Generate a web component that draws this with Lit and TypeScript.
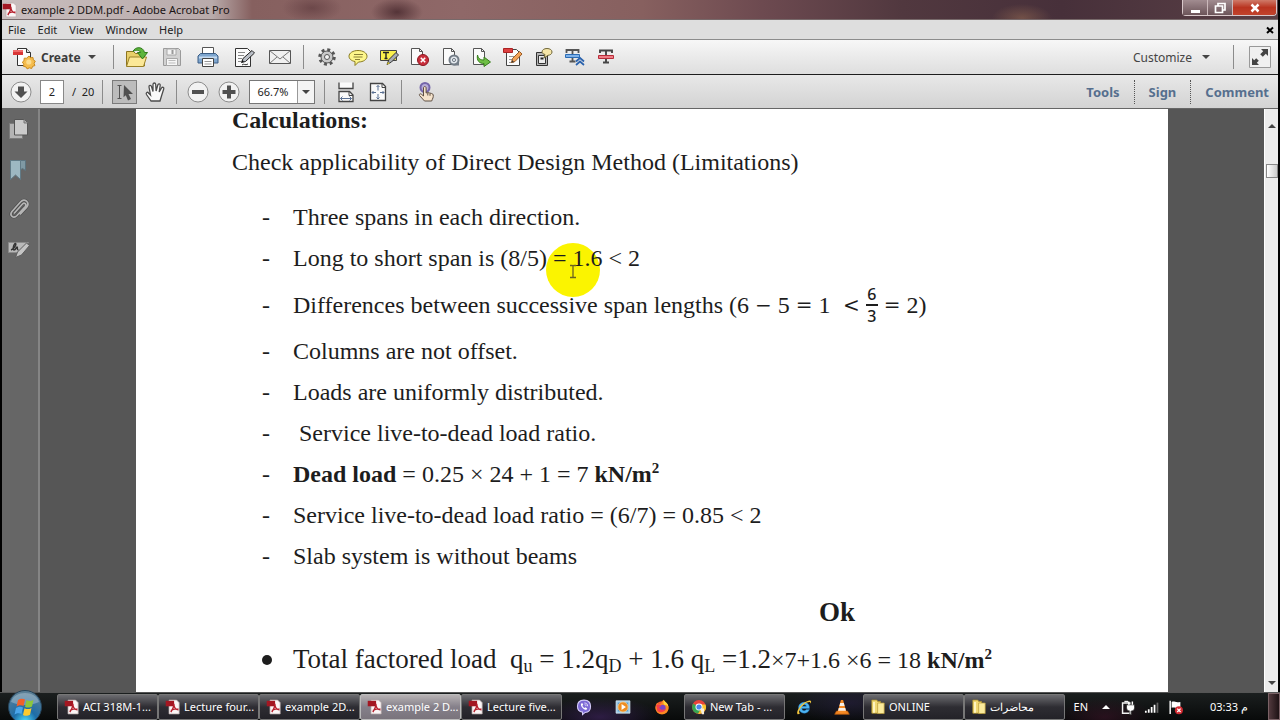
import { LitElement, html, css, svg, nothing } from "lit";
import { customElement, property } from "lit/decorators.js";
import { classMap } from "lit/directives/class-map.js";

const page = svg`<path d="M5.5 2.5h8l3 3v13h-11z" fill="#fbfbfb" stroke="#555"/><path d="M13.5 2.5v3h3" fill="none" stroke="#555"/>`;

const ICONS: Record<string, unknown> = {
  create: svg`<path d="M5.500 2.500h9l4 4v13h-13z" fill="#fdfdfd" stroke="#333"/><path d="M14.500 2.500v4h4" fill="#ddd" stroke="#333"/>
    <path d="M1 4h10v5H1z" fill="#d93636"/><path d="M1 4h10v2H1z" fill="#ee6a6a"/>
    <path d="M17 10l1.600 1.800 2.400-.3.300 2.400 2 1.300-1.200 2.100.8 2.300-2.300.7-.9 2.200-2.300-.7-2.200 1.100-1.300-2-2.400-.5.300-2.300-1.500-1.900 1.700-1.600.2-2.400 2.400 0z" fill="#f5bd4e" stroke="#c98a1e"/><circle cx="16.800" cy="16" r="2.600" fill="#fbdc8f"/>`,
  open: svg`<path d="M1.500 20V5.500h7l2 2h9V20z" fill="#e8cf6a" stroke="#8d7420"/><path d="M1.500 20.500L4.500 11h17l-3 9.500z" fill="#fbe898" stroke="#9a8128"/>
    <path d="M8 5.500C10 .500 18 0 19.500 6.500h3L17.500 13l-5-6.500h3C14.500 4 11.500 3.500 8 5.500z" fill="#5db53c" stroke="#2e7a1a"/>`,
  save: svg`<path d="M2.500 2.500h15l2 2v15h-17z" fill="#d2d2d2" stroke="#9a9a9a"/><path d="M6 3h9v6H6z" fill="#f4f4f4" stroke="#a8a8a8"/><path d="M11.500 4v4" stroke="#999" stroke-width="2"/><path d="M5.500 12.500h11v7h-11z" fill="#f6f6f6" stroke="#a8a8a8"/><path d="M7.500 14.500h7M7.500 17h7" stroke="#bbb"/>`,
  print: svg`<path d="M5.500 8V1.500h11V8" fill="#fff" stroke="#555"/><path d="M3.500 7.500h15l2.500 2.500v7h-20v-7z" fill="#7ea6cf" stroke="#3a5d85"/><path d="M2 11.500h18" stroke="#c5daef" stroke-width="2"/><path d="M5.500 12.500h11v8h-11z" fill="#fff" stroke="#444"/><path d="M7.500 15.500h7M7.500 18h7" stroke="#999"/>`,
  edit: svg`<path d="M2.500 2.500h12l3 3v15h-15z" fill="#fbfbfb" stroke="#333"/><path d="M5 6.500h7M5 9.500h6M5 12.500h4M5 15.500h3" stroke="#888"/><path d="M8.500 16.500l1.500-4 9-8 2.500 2.500-9 8.500z" fill="#b9bec6" stroke="#222"/><path d="M8.500 16.500l1-2.500 1.500 1.500z" fill="#111"/><path d="M9 19c2-2 3 1 6-1" fill="none" stroke="#333"/>`,
  mail: svg`<path d="M.500 4.500h21v13H.500z" fill="#f1f1f1" stroke="#555"/><path d="M.500 4.500L11 13 21.500 4.500M.500 17.500L8 11M21.500 17.500L14 11" fill="none" stroke="#777"/>`,
  gear: svg`<circle cx="11" cy="11" r="7" fill="none" stroke="#555" stroke-width="3.500" stroke-dasharray="2.800 2.700"/><circle cx="11" cy="11" r="6" fill="#c9c9c9" stroke="#555"/><circle cx="11" cy="11" r="2.500" fill="#f4f4f4" stroke="#555"/>`,
  comment: svg`<path d="M11 4.500c5 0 9 2.500 9 5.700s-3.500 5.800-8.500 5.800L8 19.500V15.500C4.500 15 2 12.900 2 10.200c0-3.200 4-5.700 9-5.700z" fill="#fdf68b" stroke="#8a7c22"/><path d="M7 8.500h9M6.500 11h9M8 13.500h5" stroke="#8a8136"/>`,
  mark: svg`<path d="M2.500 4.500h16v10h-16z" fill="#fbf04c" stroke="#444"/><path d="M5 6.500h6M8 6.500v6M6.500 12.500h3" stroke="#222" stroke-width="1.400"/><path d="M9 18.500l2-5 7-7 2.500 2.500-7 7z" fill="#a9adb2" stroke="#333"/><path d="M9 18.500l1-2.500 1.800 1.500z" fill="#d7c21c"/>`,
  remove: svg`<g transform="translate(-3 0)">${page}</g><circle cx="14" cy="14" r="5.500" fill="#c92f3c" stroke="#8c1620"/><path d="M11.800 11.800l4.400 4.400M16.200 11.800l-4.400 4.400" stroke="#fff" stroke-width="1.600"/>`,
  rotate: svg`<g transform="translate(-2 0)">${page}</g><circle cx="14" cy="14" r="4.500" fill="#e4e9ee" stroke="#747d87" stroke-width="2"/><circle cx="14" cy="14" r="1.600" fill="none" stroke="#747d87"/><path d="M13 19.500h6v-5z" fill="#747d87"/>`,
  extract: svg`<g transform="translate(-3 0)">${page}</g><path d="M6.500 9c1 4 3 5 6.500 5v-3l6.500 5-6.500 4.500v-3C8 17.500 5.500 14.500 6.500 9z" fill="#6fbe45" stroke="#377d1c"/>`,
  redact: svg`<path d="M4.500 3.500h10l3 3v13h-13z" fill="#fbfbfb" stroke="#444"/><path d="M7 10.500h7M7 13.500h7M7 16.500h5" stroke="#999"/><path d="M1.500 2.500h9v4h-9z" fill="#dc4040" stroke="#ac2222"/><path d="M9.500 16.500l1-4 7-7 2.500 2.500-7 7.500z" fill="#f2a35a" stroke="#9a5a22"/><path d="M9.500 16.500l.7-2.200 1.600 1.500z" fill="#333"/>`,
  stamp: svg`<path d="M3.500 6.500h11v13h-11z" fill="#b4b4b4" stroke="#333"/><path d="M5.500 9.500h7v8h-7z" fill="#ececec" stroke="#333"/><path d="M7.500 12.500h3" stroke="#222" stroke-width="2"/><path d="M14 2.500c3 0 5 1.500 5 3.500s-2 3.200-4 3.300L11 12l1-3.500C10 8 9 7 9 6c0-2 2-3.500 5-3.500z" fill="#f6e6a8" stroke="#6f6638"/>`,
  replace: svg`<path d="M2.500 7V4h12v3M8.500 4.500v11M5.500 15.500h6" fill="none" stroke="#555" stroke-width="1.800"/><path d="M1.500 8.500h14v3h-14z" fill="#7fb2ea" stroke="#2b6cb5"/><path d="M12 15.500l4-3.500 4 3.500M12 19l4-3.500 4 3.500" fill="none" stroke="#2a62ad" stroke-width="1.700"/>`,
  strike: svg`<path d="M5 7V4.500h12V7M11 4.500v12M8 16.500h6" fill="none" stroke="#444" stroke-width="1.900"/><path d="M3.500 9.500h15v3h-15z" fill="#ee7d85" stroke="#b92c3a"/>`,
  expand: svg`<path d="M.500 .500h21v21H.500z" fill="#f0f0f0" stroke="#999"/><path d="M19 3v7l-2.200-2.200-3 3L11.200 8.200l3-3L12 3zM3 19v-7l2.200 2.200 2-2L9.800 14.800l-2 2L10 19z" fill="#444"/>`,
  down: svg`<circle cx="11" cy="11" r="10" fill="#f2f2f2" stroke="#8c8c8c"/><path d="M8 5.500h6v5h3.500L11 17 4.500 10.500H8z" fill="#505050"/>`,
  select: svg`<path d="M3.500 4.500h4M3.500 17.500h4M5.500 4.500v13" fill="none" stroke="#555"/><path d="M10 4l9 9h-4.500l2.500 5-3 1.500-2.200-5.200-2.300 2z" fill="#505050"/>`,
  hand: svg`<path d="M7 20L2.500 13.500C1.500 11.500 3.500 10.500 4.500 12L6.500 14 5 6c-.3-2 2-2.300 2.500-.5L9 10.500 9 3.500c0-2 2.500-2 2.700 0l.4 6.500L13.800 4c.5-1.800 2.700-1.300 2.400.5L15.200 11l2.300-4c1-1.500 2.800-.5 2.200 1L17.500 15l-1.500 5z" fill="#fafafa" stroke="#4c4c4c" stroke-width="1.300"/>`,
  minus: svg`<circle cx="11" cy="11" r="10" fill="#f2f2f2" stroke="#8c8c8c"/><path d="M5 9h12v4H5z" fill="#505050"/>`,
  plus: svg`<circle cx="11" cy="11" r="10" fill="#f2f2f2" stroke="#8c8c8c"/><path d="M9 4.500h4V9h4.500v4H13v4.500H9V13H4.500V9H9z" fill="#505050"/>`,
  fitwidth: svg`<path d="M4 1.500v6h14v-6" fill="#fafafa" stroke="#444" stroke-width="1.300"/><path d="M4 20.500v-10h10.500l3.500 3.500v6.500z" fill="#fafafa" stroke="#444" stroke-width="1.300"/><path d="M14 10.500v4h4" fill="none" stroke="#444"/><path d="M5.500 17.500h11M7.500 15.500l-2 2 2 2M14.500 15.500l2 2-2 2" fill="none" stroke="#5a7092"/>`,
  fitpage: svg`<path d="M3.500 2.500h12l3 3v14h-15z" fill="#fafafa" stroke="#444" stroke-width="1.300"/><path d="M15 2.500v4h4" fill="none" stroke="#444"/><path d="M11 4.500v5M11 13v5M5 11.500h4M13 11.500h4M9.500 6l1.500-1.500L12.500 6M9.500 16.500L11 18l1.500-1.500M6.500 10L5 11.500 6.500 13M15.500 10l1.500 1.500-1.500 1.500" fill="none" stroke="#5a7092"/>`,
  touch: svg`<circle cx="10" cy="6.500" r="4.500" fill="#b7acd9" stroke="#7566aa" stroke-width="2"/><path d="M8.500 7c0-2 2.600-2 2.600 0v5l1.500-.5 2 .5 2 .5 1.600 1c.5 3-.7 4-1.500 6.500H9.500L4.500 14.500c-.8-1.300 1-2.300 2-1.200l2 1.700z" fill="#f5e3cc" stroke="#5f5044"/><path d="M12.800 12v2.500M15 12.500v2.300" stroke="#5f5044"/>`,
  pages: svg`<path d="M1.500 5.500h13v15h-13z" fill="#b4b4b4" stroke="#7c7c7c"/><path d="M6.500 1.500h10l3 3v12.500h-13z" fill="#cbcbcb" stroke="#555"/><path d="M16 1.500v3.500h3.500" fill="#aaa" stroke="#777"/>`,
  bookmark: svg`<path d="M11.500 2.500h6v10l-3-2-3 2z" fill="#7f99a4" stroke="#5c7480"/><path d="M2.500 2.500h10v19l-5-4.500-5 4.500z" fill="#9db8c2" stroke="#617b87"/>`,
  clip: svg`<path d="M6 15.500L14.500 6c2-2 4.500.3 2.800 2.500L9 17.500c-3.500 3.500-8 0-5-4L12.500 4c4-4.500 10 .5 6 5.500L12 16.500" fill="none" stroke="#4c4c4c" stroke-width="3"/><path d="M6 15.500L14.500 6c2-2 4.500.3 2.800 2.500L9 17.500c-3.500 3.500-8 0-5-4L12.500 4c4-4.500 10 .5 6 5.500L12 16.500" fill="none" stroke="#b5b5b5" stroke-width="1.700"/>`,
  sign: svg`<path d="M.500 4.500h20l-8 10H.500z" fill="#b9b9b9" stroke="#8b8b8b"/><path d="M3 12c3-1 6-6 4.500-6.500S4 12 6 12s2-3 3-3-.5 3 1.500 3" fill="none" stroke="#333" stroke-width="1.400"/><path d="M7.500 19.500l2-5.500 9-9 3 2.500-8 9.500z" fill="#c4c4c4" stroke="#5c5c5c"/>`,
  pdf: svg`<path d="M5.500 1.500h10.500l3.500 3.500v15.500h-14z" fill="#fbf6f6" stroke="#b8a8a8"/><path d="M1 2.500h11.500V10H1z" fill="#a31722"/><path d="M8 18c2.500-4 4.500-8 4.200-11.500M12.200 7c0 5 3 8 6.300 7.800M8 16c3.500-2.500 7-3 10.500-2" fill="none" stroke="#b51d2a" stroke-width="1.800"/>`,
  viber: svg`<path d="M11 1.500c6 0 9 2.500 9 8.500s-3 8.500-7.500 8.500L9 21.500V18C4 17.500 2 15 2 10c0-6 3-8.500 9-8.500z" fill="#7d6ad6" stroke="#d4ccf7" stroke-width="1.500"/><path d="M7 6.500c-1 1.500 1 7 7 8.500l1.500-2-2.500-1.700-1.300 1C10 11.500 9 10.200 8.800 9L10 8 8.500 5.500z" fill="#fff"/><path d="M11.500 5.500c3 0 4.500 1.800 4.500 4.500M11.800 7.800c1.500 0 2 .8 2 2" fill="none" stroke="#fff"/>`,
  media: svg`<path d="M1.500 2.500h19v17h-19z" fill="#9ecbe8" stroke="#e4f2fb"/><path d="M4 5h14v12H4z" fill="#5d9ecb"/><circle cx="11" cy="11" r="7" fill="#ee8d21" stroke="#fbd296"/><path d="M9 7l6 4-6 4z" fill="#fff"/>`,
  firefox: svg`<circle cx="11" cy="12" r="9" fill="#f4592b"/><path d="M11 21c-5 0-9-4-9-9 0-3 1-5 2.500-7L6 7.500C8 6 9 6.500 10 6.500c0-2 1.500-4.500 3.500-5.500 0 3 6.500 4.500 6.500 11 0 5-4 9-9 9z" fill="#fb8a22"/><path d="M13.500 1c1 3 6 4.500 6.300 10C18 9 17 8 14 8c-1-2-1.500-4-.5-7z" fill="#ffd43b"/><circle cx="11.500" cy="12.500" r="4.500" fill="#7a45c8"/><path d="M3 8c3-1 6-.5 7.500 1.500L7 11c1 4 5 5 9 2.500-1 5-8 6.500-11.500 2.500z" fill="#f63d4a"/>`,
  chrome: svg`<circle cx="11" cy="11" r="9.500" fill="#e9433a"/><path d="M2.800 6.200A9.500 9.500 0 0 0 9.700 20.400L14 13z" fill="#36a752"/><path d="M20 7.500A9.500 9.500 0 0 1 9.700 20.400L15 12 11 7.500z" fill="#fac42d"/><circle cx="11" cy="11" r="4.800" fill="#fff"/><circle cx="11" cy="11" r="3.600" fill="#4a86ec"/><path d="M13 13h5v8h-3z" fill="#f6eedf"/>`,
  ie: svg`<path d="M18.500 14.500c-1 3-4 5-7.300 5A7.700 7.700 0 0 1 3.500 12c0-4.300 3.300-7.500 7.700-7.500 4.500 0 7.600 3.300 7.300 8.500H8c.3 2 1.500 3 3.300 3 1.300 0 2.200-.5 2.700-1.500zM8.200 10h6c-.3-1.500-1.500-2.500-3-2.500-1.600 0-2.700 1-3 2.500z" fill="#4db5f2" stroke="#1d78c2" stroke-width=".6"/><path d="M2 20.500C-.500 17 8 4 18 2c3-.5 3.500 1.500 2 4.500C20.500 3 16 3.500 11 7.500 5.500 12 2.500 18 5.500 19.500 4 20.800 2.500 21.200 2 20.500z" fill="#f3c63c"/>`,
  vlc: svg`<path d="M3.500 16.500h15l2.500 4.500H1z" fill="#f08421" stroke="#b75a0c"/><path d="M9.500 1.500h3L17 18c-3 2-9 2-12 0z" fill="#f58a25"/><path d="M8.500 5.500h5l1 4h-7zM6.500 12.500h9l.8 3.500H5.700z" fill="#f6f0ea"/>`,
  folder: svg`<path d="M2.500 1.500h7l1 2h4v16h-12z" fill="#f0d873" stroke="#b2952f"/><path d="M10.500 5.500h9v14.500h-9z" fill="#fbeb9c" stroke="#b99b38"/><path d="M5.500 4v15" stroke="#fff7c8" stroke-width="2.500"/>`,
  plug: svg`<path d="M3.500 5.500h10v14h-10z" fill="none" stroke="#f2f2f2" stroke-width="2"/><path d="M6 3.500h5" stroke="#f2f2f2" stroke-width="2"/><path d="M9 8h11v4c0 3-2 4.500-4.500 4.500v5h-2v-5C11 16.500 9 15 9 12z" fill="#fff" stroke="#222"/><path d="M12 8V3.500M17 8V3.500" stroke="#fff" stroke-width="2"/>`,
  signal: svg`<path d="M2.500 19v-3M6.500 19v-5M10.500 19v-8M14.500 19V8" stroke="#fff" stroke-width="2.400"/><path d="M18.500 19V5" stroke="#666" stroke-width="2.400"/>`,
  flag: svg`<path d="M3 2.500v18" stroke="#fff" stroke-width="2"/><path d="M5 4c4-1.500 5 1.500 12 0v8c-6 1.500-8-1.500-12 0z" fill="#fff"/><circle cx="15" cy="15.500" r="5.500" fill="#d42c33"/><path d="M12.700 13.200l4.600 4.600M17.300 13.200l-4.600 4.600" stroke="#fff" stroke-width="1.800"/>`,
};

@customElement("ui-icon")
export class UiIcon extends LitElement {
  static styles = css`
    :host { display: block; width: 22px; height: 22px; flex: none; }
    :host([small]) { width: 16px; height: 16px; }
    svg { display: block; width: 100%; height: 100%; overflow: visible; }
  `;
  @property() name = "";
  render() {
    return html`<svg viewBox="0 0 22 22" aria-hidden="true">${ICONS[this.name] ?? nothing}</svg>`;
  }
}

const tool = (name: string, label: string, pressed = false) => html`
  <button class=${classMap({ tool: true, pressed })} aria-label=${label} title=${label}><ui-icon name=${name}></ui-icon></button>`;

@customElement("app-root")
export class AppRoot extends LitElement {
  static styles = css`
    :host { display: grid; grid-template-rows: 20px 19px 35px 35px minmax(0, 1fr) 28px; height: 100vh; overflow: hidden; box-sizing: border-box;
      font-family: "Noto Sans", "Open Sans", sans-serif; font-size: 12px; color: #222; background: #000; }
    * { box-sizing: border-box; }
    button { border: 0; margin: 0; padding: 0; background: none; font: inherit; color: inherit; }
    .titlebar, .menubar, .bar, .main { margin: 0 2px 0 2px; }
    .titlebar { display: flex; align-items: center; gap: 3px; color: #1a1414;
      background:
        radial-gradient(ellipse 30px 14px at 310px 8px, rgba(80,45,50,.5), transparent),
        radial-gradient(ellipse 26px 14px at 395px 12px, rgba(60,30,36,.7), transparent),
        radial-gradient(ellipse 30px 14px at 1020px 18px, rgba(140,100,80,.6), transparent),
        linear-gradient(90deg, #c9bebe 0, #b9abab 210px, #86605f 250px, #8f6868 460px, #87605f 640px, #6d4a50 760px, #51383f 900px, #47303a 1060px, #5a4046 100%);
      border-bottom: 1px solid #77696a; }
    .titlebar h1 { flex: 1; margin: 0; font-size: 11px; font-weight: 400; line-height: 18px; }
    .titlebar .winbtns { display: flex; align-self: flex-start; height: 16px; border: 1px solid #d8c8ca; border-top: 0; border-radius: 0 0 4px 4px; margin-right: 1px; }
    .winbtns button { width: 25px; display: grid; place-items: center; background: linear-gradient(#a18c90, #6c5459); border-right: 1px solid #cbb9bb; color: #fff; }
    .winbtns .close { width: 43px; border: 0; background: linear-gradient(#cf7a68, #b93420 50%, #c2432c); border-radius: 0 0 3px 0; }
    .winbtns svg { display: block; width: 12px; height: 12px; }
    .menubar { display: flex; align-items: center; background: #dedede; padding: 0 4px 0 6px; gap: 12px; font-size: 11px; line-height: 18px; }
    .menubar .docclose { margin-left: auto; display: block; width: 8px; height: 8px; }
    .docclose svg { display: block; width: 8px; height: 8px; }
    .bar { display: flex; align-items: center; border-top: 1px solid #8c8c8c; background: linear-gradient(#f7f7f7, #dedede); padding: 0 7px 0 10px; }
    .bar.second { border-top-color: #1d1d1d; background: linear-gradient(#e8e8e8, #d3d3d3); border-bottom: 1px solid #666; padding: 0 9px 0 8px; }
    .group { display: flex; align-items: center; }
    .wide { gap: 14px; }
    .tight { gap: 9px; }
    .sep { flex: none; width: 1px; height: 24px; background: #8b8b8b; }
    .sep.dots { background: none; border-left: 1px dotted #555; }
    .tool { display: grid; place-items: center; width: 22px; height: 24px; flex: none; }
    .tool.pressed { width: 25px; background: #bcbcbc; border: 1px solid #7b7b7b; }
    .create { display: flex; align-items: center; gap: 7px; margin-right: 17px; font-weight: 700; color: #3b3b3b; }
    .caret { flex: none; width: 0; height: 0; border: 4px solid transparent; border-top: 4px solid #444; border-bottom: 0; }
    .sep + .wide { margin-left: 11px; }
    .wide + .sep { margin: 0 12px; }
    .customize { display: flex; align-items: center; gap: 10px; margin-left: auto; margin-right: 23px; color: #444; }
    .customize + .sep { margin-right: 15px; }
    .pageno { width: 24px; height: 24px; margin: 0 8px 0 8px; padding: 0; text-align: center; border: 1px solid #888; background: #fff; font: inherit; font-size: 11px; color: #222; border-radius: 0; }
    .pagecount { font-size: 11px; margin-right: 8px; white-space: pre; }
    .nav { gap: 7px; margin: 0 10px 0 9px; }
    .zoomgrp { gap: 9px; margin: 0 9px 0 10px; }
    .zoom { display: grid; grid-template-columns: 47px 17px; align-items: center; width: 66px; height: 24px; background: #fff; border: 1px solid #777; }
    .zoom select { grid-area: 1 / 1 / 2 / 3; width: 100%; height: 100%; appearance: none; border: 0; background: none; padding: 0 0 0 7px; font: inherit; font-size: 11px; color: #222; }
    .zoom .drop { grid-area: 1 / 2; height: 100%; border-left: 1px solid #999; display: grid; place-items: center; pointer-events: none; background: #f4f4f4; }
    .fit { gap: 10px; margin: 0 12px 0 10px; }
    .touch { margin-left: 13px; }
    .panes { display: flex; align-items: center; gap: 14px; margin-left: auto; font-size: 13px; font-weight: 700; color: #566f8e; }
    .main { display: grid; grid-template-columns: 38px minmax(0, 1fr) 14px; min-height: 0; background: #565656; overflow: hidden; }
    .rail { display: flex; flex-direction: column; align-items: center; gap: 16px; padding: 8px 2px 0 0; background: #666; border-right: 2px solid #858585; }
    .view { padding: 0 96px; overflow: hidden; }
    .page { position: relative; background: #fff; height: 100%; padding: 0 96px; font-family: "Liberation Serif", serif; font-size: 24px; line-height: 41px; color: #1d1d1d; white-space: nowrap; }
    .page > * { position: relative; }
    .page h2 { margin: 0; font-size: 24px; line-height: 22px; }
    .page p { margin: 0; }
    .page .intro { line-height: 62px; }
    .page ul { list-style: none; margin: 0; padding: 0; }
    .page li { display: grid; grid-template-columns: 31px minmax(0, 1fr); padding-left: 30px; }
    .page .body { white-space: pre; }
    .page .list { padding-top: 4px; }
    .page .mathrow { align-items: center; line-height: 52px; }
    .page .mathrow .body { display: flex; align-items: center; }
    .math { display: flex; align-items: center; gap: 6px; }
    .math .op { font-family: "DejaVu Serif", serif; font-size: 20px; }
    .frac { display: flex; flex-direction: column; text-align: center; font: 500 16px/20px "Noto Sans", sans-serif; width: 12px; }
    .frac .num { border-bottom: 2px solid #1d1d1d; }
    .page .ok { padding: 15px 0 0 587px; font-size: 27px; font-weight: 700; }
    .page .total { font-size: 27px; padding-top: 6px; }
    .total li { align-items: center; }
    .dot { width: 10px; height: 10px; border-radius: 50%; background: #1d1d1d; }
    .small { font-size: 24px; }
    sub, sup { font-size: 18px; line-height: 0; }
    sub { vertical-align: -4px; }
    sup { font-size: 15px; }
    .page .halo { position: absolute; left: 410px; top: 134px; width: 54px; height: 54px; border-radius: 50%; background: #fbf400; }
    .page .ibeam { position: absolute; left: 433px; top: 140px; width: 8px; height: 30px; }
    .scroll { display: flex; flex-direction: column; align-items: center; background: #ececec; border-left: 1px solid #fff; padding: 7px 0 3px; }
    .scroll button { display: grid; place-items: center; width: 12px; height: 20px; }
    .scroll .up { height: 20px; }
    .scroll .thumb { width: 12px; height: 14px; margin-top: 28px; border: 1px solid #888; background: linear-gradient(90deg, #fff, #ccc); }
    .scroll .down { margin-top: auto; height: 12px; }
    .up .caret { transform: rotate(180deg); }
    .taskbar { display: flex; align-items: center; color: #fff; padding: 0 0 0 8px;
      background: radial-gradient(ellipse 60px 20px at 600px 24px, rgba(60,35,90,.7), transparent), radial-gradient(ellipse 60px 20px at 850px 10px, rgba(40,30,70,.5), transparent), radial-gradient(ellipse 50px 20px at 1105px 24px, rgba(60,20,40,.6), transparent), linear-gradient(#1b1f1f, #080a0a);
      border-top: 1px solid #555; }
    .orb { flex: none; display: block; width: 34px; height: 34px; margin: -3px 15px -3px 0; position: relative; }
    .orb svg { display: block; width: 34px; height: 34px; }
    .task { flex: 0 1 101px; min-width: 0; height: 26px; display: flex; align-items: center; gap: 3px; padding: 0 0 0 6px; border: 1px solid #777; border-radius: 2px;
      background: linear-gradient(#6c6c70, #2e2d33 50%, #232228); font-size: 11px; white-space: nowrap; text-align: left; }
    .task.active { background: linear-gradient(#b7b2b4, #85808a 50%, #7a747c); border-color: #bbb; }
    .quick { display: flex; align-items: center; gap: 22px; padding: 0 13px 0 11px; }
    .quick.three { gap: 23px; padding: 0 14px; }
    .quick button { display: block; }
    .tray { flex: none; align-self: stretch; margin-left: auto; display: flex; align-items: center; gap: 8px; font-size: 11px; white-space: nowrap; }
    .tray .lang { margin-right: 6px; }
    .tray .caret { transform: rotate(180deg); border-top-color: #fff; margin-right: 2px; }
    .tray time { margin: 0 12px 0 18px; }
    .desk { align-self: stretch; width: 12px; border: 1px solid #7a6266; background: linear-gradient(90deg, #51393d, #1d1214); }
  `;

  private task(icon: string, label: string, active = false) {
    return html`<button class=${classMap({ task: true, active })}><ui-icon small name=${icon}></ui-icon><span>${label}</span></button>`;
  }

  render() {
    const li = (body: unknown, cls = "") => html`<li class=${cls}><span>-</span><span class="body">${body}</span></li>`;
    return html`
      <header class="titlebar">
        <ui-icon small name="pdf"></ui-icon>
        <h1>example 2 DDM.pdf - Adobe Acrobat Pro</h1>
        <div class="winbtns">
          <button aria-label="Minimize"><svg viewBox="0 0 12 12"><path d="M2 8h9v3H2z" fill="#fff"/></svg></button>
          <button aria-label="Restore"><svg viewBox="0 0 12 12"><path d="M4 4V1.500h7V8H8.500M1.500 4h7v6.500h-7z" fill="none" stroke="#fff" stroke-width="1.700"/></svg></button>
          <button class="close" aria-label="Close"><svg viewBox="0 0 12 12"><path d="M2.500 2.500l7 7M9.500 2.500l-7 7" stroke="#fff" stroke-width="2.500"/></svg></button>
        </div>
      </header>
      <nav class="menubar">
        ${["File", "Edit", "View", "Window", "Help"].map((m) => html`<button>${m}</button>`)}
        <button class="docclose" aria-label="Close document"><svg viewBox="0 0 8 8"><path d="M1 1.500l6 5.500M7 1.500L1 7" stroke="#000" stroke-width="2"/></svg></button>
      </nav>
      <div class="bar">
        <button class="create"><ui-icon name="create"></ui-icon>Create<span class="caret"></span></button>
        <span class="sep"></span>
        <div class="group wide">
          ${tool("open", "Open")}${tool("save", "Save")}${tool("print", "Print")}${tool("edit", "Edit")}${tool("mail", "Email")}
        </div>
        <span class="sep"></span>
        <div class="group tight">
          ${tool("gear", "Settings")}${tool("comment", "Comment")}${tool("mark", "Highlight")}${tool("remove", "Delete page")}${tool("rotate", "Rotate page")}
          ${tool("extract", "Extract page")}${tool("redact", "Edit text")}${tool("stamp", "Attach")}${tool("replace", "Replace text")}${tool("strike", "Strike through")}
        </div>
        <button class="customize">Customize<span class="caret"></span></button>
        <span class="sep"></span>
        ${tool("expand", "Full screen")}
      </div>
      <div class="bar second">
        ${tool("down", "Next page")}
        <input class="pageno" aria-label="Page" .value=${"2"} />
        <span class="pagecount">/  20</span>
        <span class="sep"></span>
        <div class="group nav">${tool("select", "Select", true)}${tool("hand", "Hand")}</div>
        <span class="sep"></span>
        <div class="group zoomgrp">
          ${tool("minus", "Zoom out")}${tool("plus", "Zoom in")}
          <div class="zoom"><select aria-label="Zoom"><option>66.7%</option><option>100%</option></select><span class="drop"><span class="caret"></span></span></div>
        </div>
        <span class="sep"></span>
        <div class="group fit">${tool("fitwidth", "Fit width")}${tool("fitpage", "Fit page")}</div>
        <span class="sep"></span>
        <div class="group touch">${tool("touch", "Touch")}</div>
        <div class="panes">
          <button>Tools</button><span class="sep dots"></span><button>Sign</button><span class="sep dots"></span><button>Comment</button>
        </div>
      </div>
      <main class="main">
        <aside class="rail">
          ${tool("pages", "Pages")}${tool("bookmark", "Bookmarks")}${tool("clip", "Attachments")}${tool("sign", "Signatures")}
        </aside>
        <div class="view">
          <article class="page">
            <span class="halo"></span>
            <h2>Calculations:</h2>
            <p class="intro">Check applicability of Direct Design Method (Limitations)</p>
            <ul class="list">
              ${li("Three spans in each direction.")}
              ${li("Long to short span is (8/5) = 1.6 < 2")}
              ${li(html`<span>Differences between successive span lengths </span><span class="math"><span>(6</span><span class="op">−</span><span>5</span><span class="op">=</span><span>1</span><span class="op">&nbsp;&lt;</span><span class="frac"><span class="num">6</span><span>3</span></span><span class="op">=</span><span>2)</span></span>`, "mathrow")}
              ${li("Columns are not offset.")}
              ${li("Loads are uniformly distributed.")}
              ${li(" Service live-to-dead load ratio.")}
              ${li(html`<b>Dead load</b> = 0.25 × 24 + 1 = 7 <b>kN/m<sup>2</sup></b>`)}
              ${li("Service live-to-dead load ratio = (6/7) = 0.85 < 2")}
              ${li("Slab system is without beams")}
            </ul>
            <p class="ok">Ok</p>
            <ul class="total">
              <li><span class="dot"></span><span class="body">Total factored load  q<sub>u</sub> = 1.2q<sub>D</sub> + 1.6 q<sub>L</sub> =1.2<span class="small">×7+1.6 ×6 = 18 <b>kN/m<sup>2</sup></b></span></span></li>
            </ul>
            <svg class="ibeam" viewBox="0 0 8 30" aria-hidden="true"><path d="M1 16.500h2.500M4.500 16.500h2.500M4 16v12M1 28.500h6" fill="none" stroke="#6b6420" stroke-width="1.300"/></svg>
          </article>
        </div>
        <div class="scroll">
          <button class="up" aria-label="Scroll up"><span class="caret"></span></button>
          <span class="thumb"></span>
          <button class="down" aria-label="Scroll down"><span class="caret"></span></button>
        </div>
      </main>
      <footer class="taskbar">
        <button class="orb" aria-label="Start">
          <svg viewBox="0 0 34 34"><defs><radialGradient id="o" cx=".5" cy=".95" r=".9"><stop offset="0" stop-color="#4fe0ff"/><stop offset=".4" stop-color="#1d6da8"/><stop offset="1" stop-color="#5b7f96"/></radialGradient></defs>
            <circle cx="17" cy="17" r="16.500" fill="url(#o)" stroke="#27445a"/><path d="M3 12C6 0 28 0 31 12c-8 4-20 4-28 0z" fill="#fff" opacity=".28"/>
            <path d="M10 10c3-2 5-1.500 7-.5l-1.500 6.500c-2-1-4-1.200-7 .5z" fill="#f0602a"/><path d="M18.500 10c2 1 4.500 1.500 7-.3L24 16.500c-3 1.700-5 1.200-7 .2z" fill="#8cc63c"/><path d="M8 18c3-1.700 5-1.500 7-.5L13.500 24c-2-1-4-1.200-7 .5z" fill="#4aa5ea"/><path d="M16.500 18.200c2 1 4.500 1.500 7-.3L22 24.700c-3 1.700-5 1.200-7 .2z" fill="#fcca2f"/></svg>
        </button>
        ${this.task("pdf", "ACI 318M-1...")}${this.task("pdf", "Lecture four...")}${this.task("pdf", "example 2D...")}${this.task("pdf", "example 2 D...", true)}${this.task("pdf", "Lecture five...")}
        <div class="quick three">
          <button aria-label="Viber"><ui-icon small name="viber"></ui-icon></button>
          <button aria-label="Media Player"><ui-icon small name="media"></ui-icon></button>
          <button aria-label="Firefox"><ui-icon small name="firefox"></ui-icon></button>
        </div>
        ${this.task("chrome", "New Tab - ...")}
        <div class="quick">
          <button aria-label="Internet Explorer"><ui-icon small name="ie"></ui-icon></button>
          <button aria-label="VLC"><ui-icon small name="vlc"></ui-icon></button>
        </div>
        ${this.task("folder", "ONLINE")}${this.task("folder", "محاضرات")}
        <div class="tray">
          <span class="lang">EN</span><span class="caret"></span>
          <ui-icon small name="plug"></ui-icon><ui-icon small name="signal"></ui-icon><ui-icon small name="flag"></ui-icon>
          <time dir="ltr">03:33 م</time>
          <button class="desk" aria-label="Show desktop"></button>
        </div>
      </footer>`;
  }
}
